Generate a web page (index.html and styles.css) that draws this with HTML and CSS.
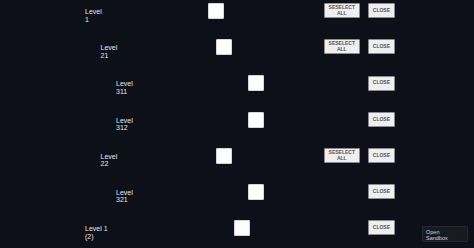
FILE: index.html
```html
<!DOCTYPE html>
<html>
<head>
<meta charset="utf-8">
<link rel="stylesheet" href="styles.css">
</head>
<body>
<div class="tree">
  <div class="row">
    <span class="label">Level 1</span>
    <input type="checkbox" class="cb cb-l1">
    <div class="actions">
      <button class="btn btn-wide">SESELECT ALL</button>
      <button class="btn">CLOSE</button>
    </div>
  </div>
  <div class="children">
    <div class="row">
      <span class="label">Level 21</span>
      <input type="checkbox" class="cb cb-l2">
      <div class="actions">
        <button class="btn btn-wide">SESELECT ALL</button>
        <button class="btn">CLOSE</button>
      </div>
    </div>
    <div class="children">
      <div class="row">
        <span class="label">Level 311</span>
        <input type="checkbox" class="cb cb-l3">
        <div class="actions">
          <button class="btn">CLOSE</button>
        </div>
      </div>
      <div class="row">
        <span class="label">Level 312</span>
        <input type="checkbox" class="cb cb-l3">
        <div class="actions">
          <button class="btn">CLOSE</button>
        </div>
      </div>
    </div>
    <div class="row">
      <span class="label">Level 22</span>
      <input type="checkbox" class="cb cb-l2">
      <div class="actions">
        <button class="btn btn-wide">SESELECT ALL</button>
        <button class="btn">CLOSE</button>
      </div>
    </div>
    <div class="children">
      <div class="row">
        <span class="label">Level 321</span>
        <input type="checkbox" class="cb cb-l3">
        <div class="actions">
          <button class="btn">CLOSE</button>
        </div>
      </div>
    </div>
  </div>
  <div class="row">
    <span class="label label-wide">Level 1 (2)</span>
    <input type="checkbox" class="cb cb-l1b">
    <div class="actions">
      <button class="btn">CLOSE</button>
    </div>
  </div>
</div>
<div class="sandbox"><span class="sandbox-text">Open Sandbox</span></div>
</body>
</html>
```
FILE: styles.css
```css
html, body {
  margin: 0;
  padding: 0;
  background: #0e1019;
  font-family: "Liberation Sans", Arial, sans-serif;
}

.tree {
  width: 310px;
  margin-left: 85px;
  padding-top: 3px;
}

.children {
  padding-left: 15.5px;
}

.row {
  display: flex;
  align-items: flex-start;
  height: 36.2px;
}

.label {
  flex: none;
  width: 20px;
  margin-top: 5px;
  font-size: 7px;
  line-height: 7.5px;
  color: #e6e6e8;
}

.label-wide {
  width: 26px;
}

.cb {
  appearance: none;
  -webkit-appearance: none;
  flex: none;
  width: 16px;
  height: 16px;
  margin: 0;
  background: #ffffff;
  border: 1px solid #d6d6d8;
  border-radius: 1px;
  box-sizing: border-box;
}

.cb-l1 { margin-left: 103px; }
.cb-l2 { margin-left: 95px; }
.cb-l3 { margin-left: 112px; }
.cb-l1b { margin-left: 123px; }

.actions {
  margin-left: auto;
  display: flex;
  gap: 8px;
  height: 15px;
  margin-top: 0.3px;
}

.btn {
  height: 15px;
  margin: 0;
  padding: 0 4px;
  box-sizing: border-box;
  background: #efeff0;
  border: 1px solid #8c8c90;
  border-radius: 1px;
  font-family: "Liberation Sans", Arial, sans-serif;
  font-weight: bold;
  font-size: 5px;
  line-height: 5.6px;
  color: #55555a;
  text-align: center;
}

.btn-wide {
  width: 36px;
  padding: 0 2px;
}

.sandbox {
  position: fixed;
  right: 6px;
  bottom: 6px;
  width: 46px;
  height: 16px;
  box-sizing: border-box;
  padding: 1.5px 3px;
  background: #181a22;
  border: 1px solid #262831;
  border-radius: 1px;
  font-size: 5.5px;
  line-height: 6px;
  color: #d4d4d8;
}

.sandbox-text {
  display: block;
  width: 24px;
}
```
